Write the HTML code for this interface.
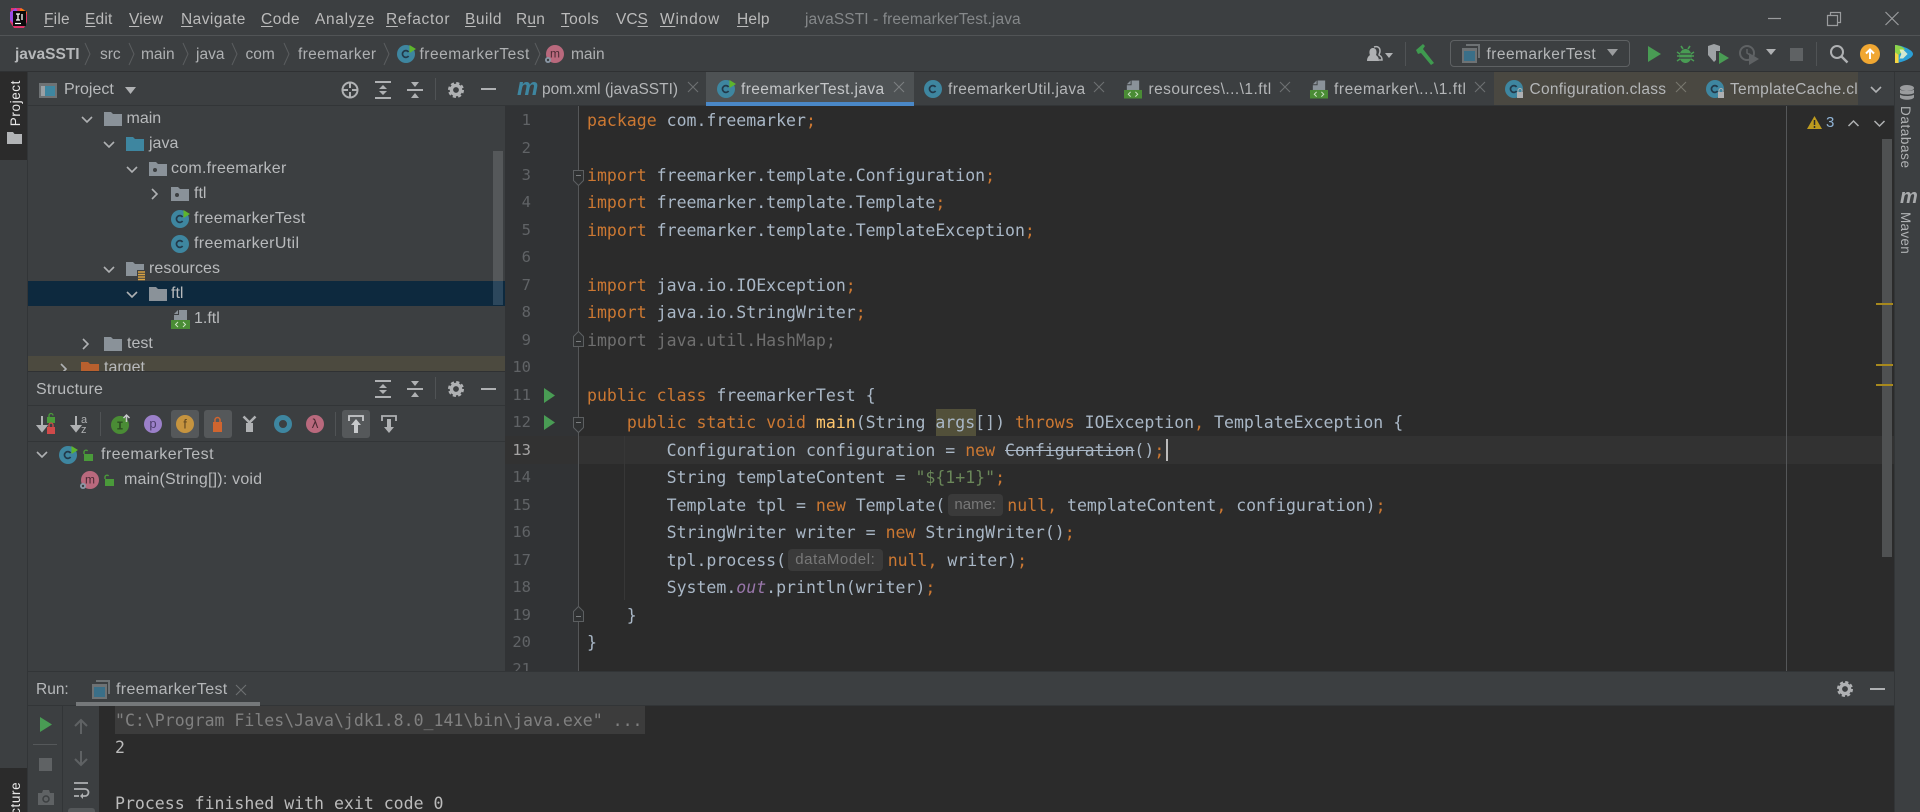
<!DOCTYPE html>
<html><head><meta charset="utf-8"><style>
html,body{margin:0;padding:0;background:#3c3f41;width:1920px;height:812px;overflow:hidden}
#r{position:relative;width:1920px;height:812px;overflow:hidden;font-family:"Liberation Sans",sans-serif;font-size:16px;color:#bbb}
.b{position:absolute}
.t{position:absolute;white-space:pre;line-height:20px}
.m{position:absolute;top:10px;white-space:pre;line-height:20px;font-size:15.5px;color:#bbb;letter-spacing:.2px}
.m u{text-underline-offset:2px}
.n{position:absolute;top:44.5px;white-space:pre;line-height:20px;font-size:15.5px;color:#aeb0b2}
.tb{position:absolute;top:80px;white-space:pre;line-height:20px;font-size:15.5px;color:#b4b6b8}
.x{position:absolute;top:81px;width:10px;height:12px}
.c,.l{position:absolute;white-space:pre;font-family:"DejaVu Sans Mono","Liberation Mono",monospace;font-size:16.55px;line-height:27.5px;color:#a9b7c6}
.c{left:587px}
.l{left:505px;width:26px;text-align:right;color:#606366;font-size:15.5px}
.k{color:#cc7832}.s{color:#6a8759}.y{color:#ffc66d}.g{color:#6f6f6f}.o{color:#9876aa;font-style:italic}
.p{position:absolute;font-size:15px;color:#787878;background:#3a3a3a;border-radius:4px;line-height:22px;height:22px;text-align:center;white-space:pre}
.tr{position:absolute;white-space:pre;line-height:20px;font-size:16px;color:#b8babc}
.con{position:absolute;left:115px;white-space:pre;font-family:"DejaVu Sans Mono","Liberation Mono",monospace;font-size:16.55px;line-height:27.5px;color:#bbb}
svg{position:absolute;overflow:visible}
</style></head><body><div id="r">
<svg width="0" height="0" style="left:0;top:0">
<defs>
<symbol id="fd" viewBox="0 0 18 14" overflow="visible"><path d="M0 0h7l2 2h9v12H0z"/></symbol>
<symbol id="pk" viewBox="0 0 18 14" overflow="visible"><path fill="#8a9299" d="M0 0h7l2 2h9v12H0z"/><circle cx="6" cy="8" r="2" fill="#3c3f41"/></symbol>
<symbol id="cl" viewBox="0 0 18 18" overflow="visible"><circle cx="9" cy="9" r="9" fill="#3e86a0"/><path d="M11.6 7A3.4 3.4 0 1 0 11.6 11" fill="none" stroke="#22394a" stroke-width="1.7"/></symbol>
<symbol id="cr" viewBox="0 0 18 18" overflow="visible"><circle cx="9" cy="9" r="9" fill="#3e86a0"/><path d="M11.6 7A3.4 3.4 0 1 0 11.6 11" fill="none" stroke="#22394a" stroke-width="1.7"/><path d="M12.5 0L19 4L12.5 8z" fill="#5eb52d"/></symbol>
<symbol id="clk" viewBox="0 0 18 18" overflow="visible"><circle cx="9" cy="9" r="9" fill="#3e86a0"/><path d="M11.6 7A3.4 3.4 0 1 0 11.6 11" fill="none" stroke="#22394a" stroke-width="1.7"/><rect x="12" y="12" width="6" height="6" fill="#aeb0b2"/><path d="M13 12V10.5a2 2 0 0 1 4 0V12" fill="none" stroke="#aeb0b2" stroke-width="1"/></symbol>
<symbol id="ft" viewBox="0 0 19 19" overflow="visible"><path fill="#8a9299" d="M8 0h8v10H3V5h5z"/><path fill="#8a9299" d="M3 4l4-4v4z"/><rect y="10" width="19" height="9" fill="#4a8c35"/><path d="M7 12l-2.5 2.5L7 17M12 12l2.5 2.5L12 17" fill="none" stroke="#cfe3c6" stroke-width="1"/></symbol>
<symbol id="ex" viewBox="0 0 16 18" overflow="visible"><path fill="#afb1b3" d="M0 0h16v2H0zM0 16h16v2H0zM8 4l4 4H4zM8 14L4 10h8z"/></symbol>
<symbol id="co" viewBox="0 0 16 18" overflow="visible"><path fill="#afb1b3" d="M0 8h16v2H0zM4 1h8L8 6zM8 12l4 5H4z"/></symbol>
<symbol id="ge" viewBox="0 0 16 16" overflow="visible"><circle cx="8" cy="8" r="4.6" fill="none" stroke="#afb1b3" stroke-width="3.4"/><circle cx="8" cy="8" r="7" fill="none" stroke="#afb1b3" stroke-width="2" stroke-dasharray="3.2 2.3"/></symbol>
<symbol id="mi" viewBox="0 0 18 18" overflow="visible"><circle cx="9" cy="9" r="9" fill="#b9697d"/><text x="9" y="12.5" font-size="12" text-anchor="middle" fill="#4b2a33" font-family="Liberation Sans">m</text><circle cx="2" cy="15" r="3" fill="#8b98a6"/><circle cx="2" cy="15" r="1.2" fill="#3c3f41"/></symbol>
<symbol id="ch" viewBox="0 0 12 8" overflow="visible"><path d="M1 1l5 5 5-5" fill="none" stroke="#afb1b3" stroke-width="1.6"/></symbol>
<symbol id="cc" viewBox="0 0 8 12" overflow="visible"><path d="M1 1l5 5-5 5" fill="none" stroke="#afb1b3" stroke-width="1.6"/></symbol>
<symbol id="nv" viewBox="0 0 6 22" overflow="visible"><path d="M0 0l5 11L0 22" fill="none" stroke="#5a5d5f" stroke-width="1"/></symbol>
<symbol id="cf" viewBox="0 0 18 20" overflow="visible"><path d="M4 0h14v14h-2V2H4z" fill="#6e7274"/><rect x="0" y="4" width="15" height="15" fill="#6e7274"/><rect x="2" y="7" width="11" height="10" fill="#3a6f88"/></symbol>
<symbol id="fu" viewBox="0 0 12 16" overflow="visible"><path d="M.5 .5h10v10l-5 5-5-5z" fill="#2f3132" stroke="#5c5f61"/><path d="M3 5.5h5" stroke="#7a7d7f"/></symbol>
<symbol id="fb" viewBox="0 0 12 16" overflow="visible"><path d="M.5 15.5h10v-10l-5-5-5 5z" fill="#2f3132" stroke="#5c5f61"/><path d="M3 10.5h5" stroke="#7a7d7f"/></symbol>
<symbol id="pl" viewBox="0 0 11 15" overflow="visible"><path d="M0 0l11 7.5L0 15z" fill="#499c54"/></symbol>
<symbol id="lo" viewBox="0 0 10 10" overflow="visible"><rect y="4" width="9" height="7" fill="#4a9a3a"/><path d="M2 4V2a2 2 0 0 1 3.6-1" fill="none" stroke="#4a9a3a" stroke-width="1.4" transform="translate(-2 0)"/></symbol>
</defs></svg>

<!-- title bar -->
<div class="b" style="left:0;top:35px;width:1920px;height:1px;background:#515456"></div>
<svg style="left:9px;top:6px" width="20" height="24" viewBox="0 0 20 24"><path d="M2 2h10l6 4v10l-3 6H5l-4-6z" fill="#e0356b"/><path d="M12 2l6 4-2 6-6-6z" fill="#f97a12"/><path d="M1 6l6-4 3 6-5 10-4-4z" fill="#9a4ce8"/><rect x="4" y="5" width="13" height="15" fill="#0b0b0b"/><path d="M7 8h4M9 8v6M7 14h4M13 8v6" stroke="#fff" stroke-width="1.3"/><path d="M6 17.5h6" stroke="#fff" stroke-width="1.2"/></svg>
<span class="m" style="left:44px"><u>F</u>ile</span><span class="m" style="left:85px"><u>E</u>dit</span><span class="m" style="left:129px"><u>V</u>iew</span><span class="m" style="left:181px;letter-spacing:.45px"><u>N</u>avigate</span><span class="m" style="left:261px;letter-spacing:.5px"><u>C</u>ode</span><span class="m" style="left:315px;letter-spacing:.7px">Analy<u>z</u>e</span><span class="m" style="left:386px;letter-spacing:.7px"><u>R</u>efactor</span><span class="m" style="left:465px;letter-spacing:.5px"><u>B</u>uild</span><span class="m" style="left:516px"><span>R</span><u>u</u>n</span><span class="m" style="left:561px;letter-spacing:.4px"><u>T</u>ools</span><span class="m" style="left:616px;letter-spacing:0"><span>VC</span><u>S</u></span><span class="m" style="left:660px;letter-spacing:.8px"><u>W</u>indow</span><span class="m" style="left:737px"><u>H</u>elp</span>
<span class="m" style="left:805px;color:#85888a;letter-spacing:.1px">javaSSTI - freemarkerTest.java</span>
<svg style="left:1768px;top:12px" width="130" height="14"><path d="M0 6.5h13" stroke="#9a9c9e" stroke-width="1.2"/><path d="M59.5 3.5h10v10h-10zM62.5 3.5V.5h10v10h-3" fill="none" stroke="#9a9c9e" stroke-width="1.2"/><path d="M117.5 0l13 13M130.5 0l-13 13" stroke="#9a9c9e" stroke-width="1.2"/></svg>

<!-- nav bar -->
<div class="b" style="left:0;top:71px;width:1920px;height:1px;background:#2f3133"></div>
<span class="n" style="left:15px;font-weight:bold;color:#b5b7b9">javaSSTI</span>
<svg style="left:85px;top:43px" width="6" height="22"><use href="#nv" width="6" height="22"/></svg><span class="n" style="left:100px">src</span>
<svg style="left:129px;top:43px" width="6" height="22"><use href="#nv" width="6" height="22"/></svg><span class="n" style="left:141px">main</span>
<svg style="left:183px;top:43px" width="6" height="22"><use href="#nv" width="6" height="22"/></svg><span class="n" style="left:196px">java</span>
<svg style="left:232px;top:43px" width="6" height="22"><use href="#nv" width="6" height="22"/></svg><span class="n" style="left:245.5px">com</span>
<svg style="left:284px;top:43px" width="6" height="22"><use href="#nv" width="6" height="22"/></svg><span class="n" style="left:298px;letter-spacing:.35px">freemarker</span>
<svg style="left:384px;top:43px" width="6" height="22"><use href="#nv" width="6" height="22"/></svg>
<svg style="left:397px;top:45px" width="18" height="18"><use href="#cr" width="18" height="18"/></svg><span class="n" style="left:419.5px;letter-spacing:.5px">freemarkerTest</span>
<svg style="left:535px;top:43px" width="6" height="22"><use href="#nv" width="6" height="22"/></svg>
<svg style="left:546px;top:45px" width="18" height="18"><use href="#mi" width="18" height="18"/></svg><span class="n" style="left:571px">main</span>

<svg style="left:1364px;top:44px" width="30" height="20"><path d="M3 17c0-4 2-5 3-6-1-2-1-7 3-7s4 5 3 7c1 1 3 2 3 6z" fill="#afb1b3"/><path d="M10 3c3-1 6 0 6 4 0 2-1 3-1 4 1 1 3 1 3 5h-3" fill="none" stroke="#afb1b3" stroke-width="1.5"/><path d="M21 9h8l-4 5z" fill="#afb1b3"/></svg>
<div class="b" style="left:1405px;top:42px;width:1px;height:24px;background:#505355"></div>
<svg style="left:1416px;top:43px" width="20" height="24"><path d="M0 7l7-6 2 2-2 3 11 14-3 2L5 10l-3 1z" fill="#3f9a4f"/></svg>
<div class="b" style="left:1450px;top:40px;width:178px;height:25px;border:1px solid #5e6163;border-radius:4px"></div>
<svg style="left:1462px;top:44px" width="18" height="20"><use href="#cf" width="18" height="20"/></svg>
<span class="n" style="left:1486.5px;color:#b4b6b8;letter-spacing:.45px">freemarkerTest</span>
<svg style="left:1607px;top:49px" width="11" height="7"><path d="M0 0h11L5.500 7z" fill="#9a9c9e"/></svg>
<svg style="left:1648px;top:46px" width="13" height="16"><path d="M0 0l13 8L0 16z" fill="#499c54"/></svg>
<svg style="left:1677px;top:45px" width="17" height="18" viewBox="0 0 17 18"><path d="M4 1l2 3M13 1l-2 3" stroke="#499c54" stroke-width="1.600" fill="none"/><ellipse cx="8.500" cy="11" rx="6" ry="7" fill="#499c54"/><path d="M0 7l3 2M17 7l-3 2M0 11h3M17 11h-3M0 16l3-2M17 16l-3-2" stroke="#499c54" stroke-width="1.500" fill="none"/><path d="M3 9h11M3 13h11" stroke="#3c3f41" stroke-width="1.200"/></svg>
<svg style="left:1708px;top:44px" width="21" height="21" viewBox="0 0 21 21"><path d="M0 2l6-2 6 2v5H8v9l-2 2-6-7z" fill="#9ea2a5"/><path d="M11 8l10 6-10 6z" fill="#499c54"/></svg>
<svg style="left:1739px;top:44px" width="20" height="21" viewBox="0 0 20 21"><circle cx="8" cy="9" r="7" fill="none" stroke="#5f6264" stroke-width="2"/><path d="M8 5v4l3 2" stroke="#5f6264" stroke-width="1.500" fill="none"/><path d="M10 9l10 6-10 6z" fill="#5f6264"/></svg>
<svg style="left:1766px;top:49px" width="10" height="6"><path d="M0 0h10L5 6z" fill="#afb1b3"/></svg>
<div class="b" style="left:1790px;top:48px;width:13px;height:13px;background:#5f6264"></div>
<div class="b" style="left:1816px;top:42px;width:1px;height:24px;background:#505355"></div>
<svg style="left:1830px;top:45px" width="18" height="18"><circle cx="7" cy="7" r="6" fill="none" stroke="#afb1b3" stroke-width="2"/><path d="M11.500 11.500l6 6" stroke="#afb1b3" stroke-width="2.400"/></svg>
<svg style="left:1860px;top:44px" width="20" height="20"><circle cx="10" cy="10" r="10" fill="#f0a732"/><path d="M10 15V6M6 9.500l4-4 4 4" fill="none" stroke="#fff" stroke-width="2"/></svg>
<svg style="left:1895px;top:45px" width="18" height="18" viewBox="0 0 20 20"><path d="M0 0c6 0 20 5 20 10S6 20 0 20z" fill="#2a9fd6"/><path d="M0 0c4 0 9 2 11 5L4 11 0 8z" fill="#8ed44a"/><path d="M0 8l4 3v9H0z" fill="#f5d442"/><path d="M5 5h4l5 5-5 5H5l2-5z" fill="#f1f5d0" opacity=".85"/></svg>

<!-- left stripe -->
<div class="b" style="left:0;top:72px;width:27px;height:88px;background:#2b2b2b"></div>
<div class="b" style="left:27px;top:72px;width:1px;height:740px;background:#323537"></div>
<span class="b" style="left:7px;top:80px;writing-mode:vertical-rl;transform:rotate(180deg);font-size:13.500px;line-height:18px;color:#e8e8e8;letter-spacing:.6px">Project</span>
<svg style="left:7px;top:132px" width="15" height="12"><path d="M0 0h6l1.500 2H15v10H0z" fill="#b2b4b6"/></svg>

<!-- project panel -->
<div class="b" style="left:28px;top:72px;width:477px;height:34px;background:#3c3f41"></div>
<div class="b" style="left:28px;top:105px;width:477px;height:1px;background:#323537"></div>
<svg style="left:39px;top:83px" width="18" height="15"><rect width="18" height="15" fill="#6e7274"/><rect x="2" y="3" width="14" height="10" fill="#3e86a0"/><rect x="2" y="3" width="4" height="10" fill="#9aa0a4"/></svg>
<span class="tb" style="left:64px;top:80px;color:#b8babc;font-size:16px">Project</span>
<svg style="left:125px;top:87px" width="11" height="7"><path d="M0 0h11L5.500 7z" fill="#afb1b3"/></svg>
<svg style="left:341px;top:81px" width="18" height="18" viewBox="0 0 18 18"><circle cx="9" cy="9" r="7.500" fill="none" stroke="#afb1b3" stroke-width="2"/><path d="M9 2v5M9 11v5M2 9h5M11 9h5" stroke="#afb1b3" stroke-width="2"/></svg>
<svg style="left:375px;top:81px" width="16" height="18"><use href="#ex" width="16" height="18"/></svg>
<svg style="left:407px;top:81px" width="16" height="18"><use href="#co" width="16" height="18"/></svg>
<div class="b" style="left:435px;top:78px;width:1px;height:22px;background:#505355"></div>
<svg style="left:448px;top:82px" width="16" height="16"><use href="#ge" width="16" height="16"/></svg>
<div class="b" style="left:481px;top:88px;width:15px;height:2px;background:#afb1b3"></div>

<div class="b" style="left:28px;top:281px;width:477px;height:25px;background:#0d293e"></div>
<div class="b" style="left:28px;top:356px;width:477px;height:20px;background:#4c4a3f"></div>
<div class="b" style="left:493px;top:151px;width:10px;height:130px;background:#55585a"></div>
<div class="b" style="left:493px;top:281px;width:10px;height:24px;background:#2c475c"></div>

<svg style="left:81px;top:116px" width="12" height="8"><use href="#ch" width="12" height="8"/></svg>
<svg style="left:104px;top:112px" width="18" height="14"><use href="#fd" fill="#8a9299" width="18" height="14"/></svg><span class="tr" style="left:126.500px;top:109px">main</span>
<svg style="left:103px;top:141px" width="12" height="8"><use href="#ch" width="12" height="8"/></svg>
<svg style="left:126px;top:137px" width="18" height="14"><use href="#fd" fill="#3e86a0" width="18" height="14"/></svg><span class="tr" style="left:149px;top:134px">java</span>
<svg style="left:126px;top:166px" width="12" height="8"><use href="#ch" width="12" height="8"/></svg>
<svg style="left:149px;top:162px" width="18" height="14"><use href="#pk" width="18" height="14"/></svg><span class="tr" style="left:171px;top:159px;letter-spacing:.25px">com.freemarker</span>
<svg style="left:151px;top:188px" width="8" height="12"><use href="#cc" width="8" height="12"/></svg>
<svg style="left:171px;top:187px" width="18" height="14"><use href="#pk" width="18" height="14"/></svg><span class="tr" style="left:194px;top:184px">ftl</span>
<svg style="left:171px;top:210px" width="18" height="18"><use href="#cr" width="18" height="18"/></svg><span class="tr" style="left:194px;top:209px;letter-spacing:.35px">freemarkerTest</span>
<svg style="left:171px;top:235px" width="18" height="18"><use href="#cl" width="18" height="18"/></svg><span class="tr" style="left:194px;top:234px;letter-spacing:.35px">freemarkerUtil</span>
<svg style="left:103px;top:266px" width="12" height="8"><use href="#ch" width="12" height="8"/></svg>
<svg style="left:126px;top:262px" width="18" height="18" viewBox="0 0 18 18"><path d="M0 0h7l2 2h9v12H0z" fill="#8a9299"/><rect x="11" y="8" width="8" height="11" fill="#3c3f41"/><path d="M12 10h7M12 12.500h7M12 15h7M12 17.500h7" stroke="#d9a343" stroke-width="1.500"/></svg><span class="tr" style="left:149px;top:259px;letter-spacing:.1px">resources</span>
<svg style="left:126px;top:291px" width="12" height="8"><use href="#ch" width="12" height="8"/></svg>
<svg style="left:149px;top:287px" width="18" height="14"><use href="#fd" fill="#8a9299" width="18" height="14"/></svg><span class="tr" style="left:171px;top:284px">ftl</span>
<svg style="left:171px;top:310px" width="19" height="19"><use href="#ft" width="19" height="19"/></svg><span class="tr" style="left:194px;top:309px">1.ftl</span>
<svg style="left:82px;top:338px" width="8" height="12"><use href="#cc" width="8" height="12"/></svg>
<svg style="left:104px;top:337px" width="18" height="14"><use href="#fd" fill="#8a9299" width="18" height="14"/></svg><span class="tr" style="left:127px;top:334px">test</span>
<svg style="left:60px;top:363px" width="8" height="12"><use href="#cc" width="8" height="12"/></svg>
<svg style="left:81px;top:362px" width="18" height="14"><use href="#fd" fill="#b8602e" width="18" height="14"/></svg><span class="tr" style="left:104px;top:358px">target</span>

<!-- structure -->
<div class="b" style="left:28px;top:371px;width:477px;height:301px;background:#3c3f41"></div>
<div class="b" style="left:28px;top:371px;width:477px;height:1px;background:#2f3133"></div>
<div class="b" style="left:28px;top:405px;width:477px;height:1px;background:#323537"></div>
<div class="b" style="left:28px;top:441px;width:477px;height:1px;background:#323537"></div>
<span class="tb" style="left:36px;top:380px;color:#b8babc;font-size:16px;letter-spacing:.25px">Structure</span>
<svg style="left:375px;top:380px" width="16" height="18"><use href="#ex" width="16" height="18"/></svg>
<svg style="left:407px;top:380px" width="16" height="18"><use href="#co" width="16" height="18"/></svg>
<div class="b" style="left:435px;top:377px;width:1px;height:22px;background:#505355"></div>
<svg style="left:448px;top:381px" width="16" height="16"><use href="#ge" width="16" height="16"/></svg>
<div class="b" style="left:481px;top:388px;width:15px;height:2px;background:#afb1b3"></div>

<div class="b" style="left:171px;top:410px;width:28px;height:28px;border-radius:3px;background:#55585a"></div>
<div class="b" style="left:204px;top:410px;width:28px;height:28px;border-radius:3px;background:#55585a"></div>
<div class="b" style="left:342px;top:410px;width:28px;height:28px;border-radius:3px;background:#55585a"></div>
<div class="b" style="left:100px;top:412px;width:1px;height:24px;background:#505355"></div>
<div class="b" style="left:335px;top:412px;width:1px;height:24px;background:#505355"></div>
<svg style="left:37px;top:414px" width="20" height="20" viewBox="0 0 20 20"><path d="M5 2v12M1 12l4 5 4-5z" stroke="#afb1b3" stroke-width="2" fill="#afb1b3"/><path d="M10 6h8v6h-8z" fill="#4a9a3a" transform="translate(0 -3)"/><path d="M10 13h8v7h-8z" fill="#d04a4a"/><path d="M12 3V1.500a2 2 0 0 1 4 0" stroke="#4a9a3a" fill="none" stroke-width="1.300"/><path d="M12 13v-2a2 2 0 0 1 4 0v2" stroke="#d04a4a" fill="none" stroke-width="1.300"/></svg>
<svg style="left:71px;top:414px" width="20" height="20" viewBox="0 0 20 20"><path d="M5 2v12M1 12l4 5 4-5z" stroke="#afb1b3" stroke-width="2" fill="#afb1b3"/><text x="10" y="9" font-size="11" fill="#afb1b3" font-family="Liberation Sans">a</text><text x="10" y="19" font-size="11" fill="#afb1b3" font-family="Liberation Sans">z</text></svg>
<svg style="left:111px;top:414px" width="19" height="20" viewBox="0 0 19 20"><circle cx="9" cy="11" r="9" fill="#4a8c35"/><text x="9" y="15.500" font-size="12" text-anchor="middle" fill="#2d4f22" font-weight="bold" font-family="Liberation Mono">I</text><path d="M15.500 8V1M12.500 4l3-3 3 3" fill="none" stroke="#c7c9cb" stroke-width="1.500"/></svg>
<svg style="left:144px;top:415px" width="18" height="18"><circle cx="9" cy="9" r="9" fill="#9b80c9"/><text x="9" y="13" font-size="13" text-anchor="middle" fill="#4d3d6b" font-family="Liberation Sans">p</text></svg>
<svg style="left:176px;top:415px" width="18" height="18"><circle cx="9" cy="9" r="9" fill="#c6943f"/><text x="9" y="13.500" font-size="13" text-anchor="middle" fill="#5f4620" font-family="Liberation Sans">f</text></svg>
<svg style="left:213px;top:417px" width="10" height="15"><rect y="5" width="9" height="10" fill="#d0652f"/><path d="M2 5V3a2.500 2.500 0 0 1 5 0v2" fill="none" stroke="#d0652f" stroke-width="1.500"/></svg>
<svg style="left:242px;top:415px" width="15" height="18"><path d="M1.500 1.500l6 6 6-6" fill="none" stroke="#afb1b3" stroke-width="2.500"/><rect x="4" y="8" width="7" height="9" fill="#afb1b3"/></svg>
<svg style="left:274px;top:415px" width="18" height="18"><circle cx="9" cy="9" r="6.500" fill="none" stroke="#3e86a0" stroke-width="5"/></svg>
<svg style="left:306px;top:415px" width="18" height="18"><circle cx="9" cy="9" r="9" fill="#b9697d"/><text x="9" y="13" font-size="12" text-anchor="middle" fill="#4b2a33" font-family="DejaVu Sans">λ</text></svg>
<svg style="left:348px;top:415px" width="16" height="19"><path d="M1 6V1h14v5" fill="none" stroke="#c7c9cb" stroke-width="1.800"/><path d="M8 4l5 6h-3v8H6v-8H3z" fill="#c7c9cb"/></svg>
<svg style="left:381px;top:415px" width="16" height="19"><path d="M1 6V1h14v5" fill="none" stroke="#afb1b3" stroke-width="1.800"/><path d="M8 18l5-6h-3V4H6v8H3z" fill="#afb1b3"/></svg>

<svg style="left:36px;top:451px" width="12" height="8"><use href="#ch" width="12" height="8"/></svg>
<svg style="left:59px;top:446px" width="18" height="18"><use href="#cr" width="18" height="18"/></svg>
<svg style="left:84px;top:450px" width="10" height="10"><use href="#lo" width="10" height="10"/></svg>
<span class="tr" style="left:101px;top:445px;letter-spacing:.45px">freemarkerTest</span>
<svg style="left:81px;top:471px" width="18" height="18"><use href="#mi" width="18" height="18"/></svg>
<svg style="left:105px;top:475px" width="10" height="10"><use href="#lo" width="10" height="10"/></svg>
<span class="tr" style="left:124px;top:470px;letter-spacing:.2px">main(String[]): void</span>

<!-- editor -->
<div class="b" style="left:505px;top:106px;width:74px;height:565px;background:#313335"></div>
<div class="b" style="left:578px;top:106px;width:1px;height:565px;background:#555759"></div>
<div class="b" style="left:579px;top:106px;width:1315px;height:565px;background:#2b2b2b"></div>
<div class="b" style="left:505px;top:436px;width:73px;height:28px;background:#323232"></div>
<div class="b" style="left:579px;top:436px;width:1315px;height:28px;background:#323232"></div>
<div class="b" style="left:624px;top:436px;width:1px;height:164px;background:#373737"></div>
<div class="b" style="left:936px;top:409px;width:40px;height:27px;background:#52503a"></div>
<div class="b" style="left:1786px;top:106px;width:1px;height:565px;background:#555759"></div>
<div class="b" style="left:1882px;top:139px;width:10px;height:418px;background:#4f5152"></div>
<div class="b" style="left:1876px;top:302.500px;width:17px;height:2px;background:#a8891d"></div>
<div class="b" style="left:1876px;top:364px;width:17px;height:2px;background:#a8891d"></div>
<div class="b" style="left:1876px;top:384px;width:17px;height:2px;background:#a8891d"></div>

<svg style="left:1807px;top:116px" width="15" height="13"><path d="M7.500 0L15 13H0z" fill="#bd9a1e"/><path d="M7.500 4v5M7.500 10v2" stroke="#2b2b2b" stroke-width="1.500"/></svg>
<span class="t" style="left:1826px;top:113px;font-size:15px;color:#8fb2d4">3</span>
<svg style="left:1848px;top:120px" width="11" height="7"><path d="M.5 6L5.500 1l5 5" fill="none" stroke="#afb1b3" stroke-width="1.500"/></svg>
<svg style="left:1874px;top:120px" width="11" height="7"><path d="M.5 1l5 5 5-5" fill="none" stroke="#afb1b3" stroke-width="1.500"/></svg>

<span class="l" style="top:107px">1</span><span class="l" style="top:134.500px">2</span><span class="l" style="top:162px">3</span><span class="l" style="top:189.400px">4</span><span class="l" style="top:216.900px">5</span><span class="l" style="top:244.400px">6</span><span class="l" style="top:271.800px">7</span><span class="l" style="top:299.300px">8</span><span class="l" style="top:326.800px">9</span><span class="l" style="top:354.200px">10</span><span class="l" style="top:381.700px">11</span><span class="l" style="top:409.200px">12</span><span class="l" style="top:436.600px;color:#a4a3a3">13</span><span class="l" style="top:464.100px">14</span><span class="l" style="top:491.600px">15</span><span class="l" style="top:519.100px">16</span><span class="l" style="top:546.500px">17</span><span class="l" style="top:574px">18</span><span class="l" style="top:601.500px">19</span><span class="l" style="top:628.900px">20</span><span class="l" style="top:656.400px">21</span>

<svg style="left:544px;top:388px" width="11" height="15"><use href="#pl" width="11" height="15"/></svg>
<svg style="left:544px;top:415px" width="11" height="15"><use href="#pl" width="11" height="15"/></svg>
<svg style="left:573px;top:170px" width="12" height="16"><use href="#fu" width="12" height="16"/></svg>
<svg style="left:573px;top:331px" width="12" height="16"><use href="#fb" width="12" height="16"/></svg>
<svg style="left:573px;top:417px" width="12" height="16"><use href="#fu" width="12" height="16"/></svg>
<svg style="left:573px;top:606px" width="12" height="16"><use href="#fb" width="12" height="16"/></svg>

<div class="c" style="top:107px"><span class="k">package</span> com.freemarker<span class="k">;</span></div>
<div class="c" style="top:162px"><span class="k">import</span> freemarker.template.Configuration<span class="k">;</span></div>
<div class="c" style="top:189.400px"><span class="k">import</span> freemarker.template.Template<span class="k">;</span></div>
<div class="c" style="top:216.900px"><span class="k">import</span> freemarker.template.TemplateException<span class="k">;</span></div>
<div class="c" style="top:271.800px"><span class="k">import</span> java.io.IOException<span class="k">;</span></div>
<div class="c" style="top:299.300px"><span class="k">import</span> java.io.StringWriter<span class="k">;</span></div>
<div class="c g" style="top:326.800px">import java.util.HashMap;</div>
<div class="c" style="top:381.700px"><span class="k">public class</span> freemarkerTest {</div>
<div class="c" style="top:409.200px">    <span class="k">public static void</span> <span class="y">main</span>(String args[]) <span class="k">throws</span> IOException<span class="k">,</span> TemplateException {</div>
<div class="c" style="top:436.600px">        Configuration configuration = <span class="k">new</span> <s>Configuration</s>()<span class="k">;</span></div>
<div class="b" style="left:1166px;top:439px;width:2px;height:22px;background:#bbb"></div>
<div class="c" style="top:464.100px">        String templateContent = <span class="s">"${1+1}"</span><span class="k">;</span></div>
<div class="c" style="top:491.600px">        Template tpl = <span class="k">new</span> Template(</div>
<div class="p" style="left:947.500px;top:494px;width:55.500px">name:</div>
<div class="c" style="left:1007.300px;top:491.600px"><span class="k">null,</span> templateContent<span class="k">,</span> configuration)<span class="k">;</span></div>
<div class="c" style="top:519.100px">        StringWriter writer = <span class="k">new</span> StringWriter()<span class="k">;</span></div>
<div class="c" style="top:546.500px">        tpl.process(</div>
<div class="p" style="left:787.700px;top:549px;width:95.300px;letter-spacing:.6px">dataModel:</div>
<div class="c" style="left:887.700px;top:546.500px"><span class="k">null,</span> writer)<span class="k">;</span></div>
<div class="c" style="top:574px">        System.<span class="o">out</span>.println(writer)<span class="k">;</span></div>
<div class="c" style="top:601.500px">    }</div>
<div class="c" style="top:628.900px">}</div>

<!-- tabs -->
<div class="b" style="left:505px;top:72px;width:1389px;height:34px;background:#3c3f41"></div>
<div class="b" style="left:505px;top:105px;width:1389px;height:1px;background:#323537"></div>
<div class="b" style="left:706px;top:72px;width:208px;height:34px;background:#4e5254"></div>
<div class="b" style="left:706px;top:102px;width:208px;height:4px;background:#4a88c7"></div>
<div class="b" style="left:1494px;top:72px;width:364px;height:33px;background:#4a4841"></div>
<span class="b" style="left:517px;top:74px;font-family:'Liberation Sans',sans-serif;font-weight:bold;font-style:italic;font-size:24px;line-height:28px;color:#3e86a0">m</span>
<span class="tb" style="left:542px">pom.xml (javaSSTI)</span>
<svg class="x" style="left:688px"><path d="M0 1l10 10M10 1L0 11" stroke="#6d7072" stroke-width="1.100"/></svg>
<svg style="left:717px;top:80px" width="18" height="18"><use href="#cr" width="18" height="18"/></svg>
<span class="tb" style="left:741px;color:#c4c6c8;letter-spacing:.39px">freemarkerTest.java</span>
<svg class="x" style="left:894px"><path d="M0 1l10 10M10 1L0 11" stroke="#7c7f81" stroke-width="1.100"/></svg>
<svg style="left:924px;top:80px" width="18" height="18"><use href="#cl" width="18" height="18"/></svg>
<span class="tb" style="left:948px;letter-spacing:.39px">freemarkerUtil.java</span>
<svg class="x" style="left:1094px"><path d="M0 1l10 10M10 1L0 11" stroke="#6d7072" stroke-width="1.100"/></svg>
<svg style="left:1124px;top:80px" width="18" height="19"><use href="#ft" width="18" height="19"/></svg>
<span class="tb" style="left:1148.500px;letter-spacing:.45px">resources\...\1.ftl</span>
<svg class="x" style="left:1280px"><path d="M0 1l10 10M10 1L0 11" stroke="#6d7072" stroke-width="1.100"/></svg>
<svg style="left:1310px;top:80px" width="18" height="19"><use href="#ft" width="18" height="19"/></svg>
<span class="tb" style="left:1334px;letter-spacing:.55px">freemarker\...\1.ftl</span>
<svg class="x" style="left:1475px"><path d="M0 1l10 10M10 1L0 11" stroke="#6d7072" stroke-width="1.100"/></svg>
<svg style="left:1505px;top:80px" width="18" height="18"><use href="#clk" width="18" height="18"/></svg>
<span class="tb" style="left:1529.500px;letter-spacing:.26px">Configuration.class</span>
<svg class="x" style="left:1676px"><path d="M0 1l10 10M10 1L0 11" stroke="#78766e" stroke-width="1.100"/></svg>
<svg style="left:1706px;top:80px" width="18" height="18"><use href="#clk" width="18" height="18"/></svg>
<div class="b" style="left:1730px;top:72px;width:128px;height:33px;overflow:hidden"><span class="tb" style="left:0;top:8px;letter-spacing:.3px">TemplateCache.class</span></div>
<svg style="left:1870px;top:86px" width="12" height="8"><use href="#ch" width="12" height="8"/></svg>

<!-- right stripe -->
<div class="b" style="left:1894px;top:72px;width:26px;height:740px;background:#3c3f41;border-left:1px solid #323537;box-sizing:border-box"></div>
<svg style="left:1900px;top:85px" width="14" height="16"><ellipse cx="7" cy="3" rx="7" ry="3" fill="#9a9c9e"/><path d="M0 4.500c2 2 12 2 14 0v3.500c-2 2-12 2-14 0zM0 9.500c2 2 12 2 14 0v3c-2 3-12 3-14 0z" fill="#9a9c9e"/></svg>
<span class="b" style="left:1896px;top:106px;writing-mode:vertical-rl;font-size:13.500px;line-height:18px;color:#b0b2b4;letter-spacing:.6px">Database</span>
<span class="b" style="left:1900px;top:185px;font-weight:bold;font-style:italic;font-size:20px;line-height:24px;color:#a8aaac">m</span>
<span class="b" style="left:1896px;top:212px;writing-mode:vertical-rl;font-size:13.500px;line-height:18px;color:#b0b2b4;letter-spacing:.3px">Maven</span>

<!-- run panel -->
<div class="b" style="left:28px;top:671px;width:1866px;height:35px;background:#3c3f41;border-top:1px solid #323537;border-bottom:1px solid #323537;box-sizing:border-box"></div>
<span class="tb" style="left:36px;top:680px;color:#b8babc">Run:</span>
<svg style="left:92px;top:680px" width="18" height="20"><use href="#cf" width="18" height="20"/></svg>
<span class="tb" style="left:116px;top:680px;font-size:16px;letter-spacing:.35px">freemarkerTest</span>
<svg class="x" style="left:236px;top:684px"><path d="M0 1l10 10M10 1L0 11" stroke="#6d7072" stroke-width="1.100"/></svg>
<div class="b" style="left:76px;top:702px;width:184px;height:4px;background:#75787a"></div>
<svg style="left:1837px;top:681px" width="16" height="16"><use href="#ge" width="16" height="16"/></svg>
<div class="b" style="left:1870px;top:688px;width:15px;height:2px;background:#afb1b3"></div>

<div class="b" style="left:28px;top:706px;width:71px;height:106px;background:#3c3f41"></div>
<div class="b" style="left:62px;top:706px;width:1px;height:106px;background:#323537"></div>
<div class="b" style="left:99px;top:706px;width:1795px;height:106px;background:#2b2b2b"></div>
<svg style="left:40px;top:717px" width="12" height="15"><path d="M0 0l12 7.500L0 15z" fill="#499c54"/></svg>
<div class="b" style="left:33px;top:744px;width:24px;height:1px;background:#55585a"></div>
<div class="b" style="left:39px;top:758px;width:13px;height:13px;background:#5f6264"></div>
<svg style="left:38px;top:790px" width="16" height="16"><path d="M0 3h4l1-3h6l1 3h4v12H0z" fill="#5f6264"/><circle cx="8" cy="9" r="3" fill="none" stroke="#3c3f41" stroke-width="1.500"/></svg>
<svg style="left:74px;top:718px" width="14" height="16"><path d="M7 16V2M1 8l6-6 6 6" fill="none" stroke="#5f6264" stroke-width="2"/></svg>
<svg style="left:74px;top:751px" width="14" height="16"><path d="M7 0v14M1 8l6 6 6-6" fill="none" stroke="#5f6264" stroke-width="2"/></svg>
<svg style="left:73px;top:782px" width="16" height="16"><path d="M1 1h14M1 14h5M1 7h11a3 3 0 0 1 0 7H8" fill="none" stroke="#afb1b3" stroke-width="1.800"/><path d="M10 11l-3 3 3 3z" fill="#afb1b3"/></svg>
<div class="b" style="left:68px;top:808px;width:27px;height:4px;background:#55585a;border-radius:3px 3px 0 0"></div>

<div class="b" style="left:0;top:768px;width:27px;height:44px;background:#2b2b2b"></div>
<span class="b" style="left:7px;top:782px;writing-mode:vertical-rl;transform:rotate(180deg);font-size:13.500px;line-height:18px;color:#e8e8e8;letter-spacing:.6px;white-space:nowrap;height:62px;text-align:right">Structure</span>

<div class="b" style="left:115px;top:706px;width:530px;height:28px;background:#3c3c3c"></div>
<div class="con" style="top:707px;color:#808080">"C:\Program Files\Java\jdk1.8.0_141\bin\java.exe" ...</div>
<div class="con" style="top:734px">2</div>
<div class="con" style="top:790px">Process finished with exit code 0</div>
</div></body></html>
